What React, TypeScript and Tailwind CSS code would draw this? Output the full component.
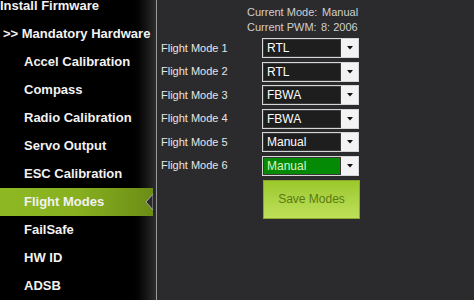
import React from "react";

const navItems = [
  { label: "Install Firmware", indent: false },
  { label: ">> Mandatory Hardware", indent: false, prefix: true },
  { label: "Accel Calibration", indent: true },
  { label: "Compass", indent: true },
  { label: "Radio Calibration", indent: true },
  { label: "Servo Output", indent: true },
  { label: "ESC Calibration", indent: true },
  { label: "Flight Modes", indent: true, active: true },
  { label: "FailSafe", indent: true },
  { label: "HW ID", indent: true },
  { label: "ADSB", indent: true },
];

const modes = [
  { label: "Flight Mode 1", value: "RTL" },
  { label: "Flight Mode 2", value: "RTL" },
  { label: "Flight Mode 3", value: "FBWA" },
  { label: "Flight Mode 4", value: "FBWA" },
  { label: "Flight Mode 5", value: "Manual" },
  { label: "Flight Mode 6", value: "Manual", current: true },
];

const Combo = ({ value, current }: { value: string; current?: boolean }) => (
  <div className="flex h-[20px] w-[97px] border border-[#d6d6d6] bg-[#d6d6d6]">
    <div
      className={
        "flex flex-1 items-center border border-[#3a3a3a] pl-[3px] text-[12px] " +
        (current ? "bg-[#058a05] text-[#d8f5c8]" : "bg-[#1e1e1f] text-white")
      }
    >
      {value}
    </div>
    <div className="flex w-[17px] items-center justify-center bg-[#f3f3f3]">
      <svg width="6" height="4" viewBox="0 0 6 4">
        <path d="M0 0h6L3 3.5z" fill="#111" />
      </svg>
    </div>
  </div>
);

export default function App() {
  return (
    <div
      className="flex h-[300px] w-[474px] overflow-hidden bg-[#2b2b2d]"
      style={{ fontFamily: '"Liberation Sans", Arial, sans-serif' }}
    >
      {/* Sidebar */}
      <div className="relative w-[156px] shrink-0 bg-gradient-to-r from-black from-[82%] to-[#2e2e2e]">
        <div className="-mt-[8px] flex flex-col">
          {navItems.map((item) => (
            <div
              key={item.label}
              className={
                "relative flex h-[28px] items-center text-[13px] font-bold text-[#f2f2f2] " +
                (item.indent ? "pl-[24px] " : item.prefix ? "pl-[3px] " : "pl-0 ") +
                (item.active
                  ? "mr-[3px] bg-gradient-to-r from-[#8fb923] via-[#88b020] to-[#6c8d16] text-[#eaf5c8]"
                  : "")
              }
            >
              {item.label}
              {item.active && (
                <svg
                  className="absolute right-0 top-[6px]"
                  width="8"
                  height="16"
                  viewBox="0 0 8 16"
                >
                  <path d="M8 0L1 8l7 8z" fill="#2b2b2d" stroke="#a8a8a8" strokeWidth="1" />
                </svg>
              )}
            </div>
          ))}
        </div>
      </div>
      <div className="w-px shrink-0 bg-[#9a9a9a]" />

      {/* Content */}
      <div className="flex flex-col pl-[4px] text-[11px] text-[#e6e6e6]">
        <div className="ml-[86px] flex flex-col pt-[5px] leading-[15px] text-[#d0d0d0]">
          <div className="flex">
            <span className="w-[75px]">Current Mode:</span>
            <span>Manual</span>
          </div>
          <div className="flex">
            <span className="w-[74px]">Current PWM:</span>
            <span>8: 2006</span>
          </div>
        </div>

        <div className="mt-[3px] flex flex-col gap-[3.5px]">
          {modes.map((m) => (
            <div key={m.label} className="flex items-center">
              <span className="w-[101px]">{m.label}</span>
              <Combo value={m.value} current={m.current} />
            </div>
          ))}
        </div>

        <button className="ml-[102px] mt-[4px] flex h-[39px] w-[97px] items-center justify-center border border-[#8aa82a] bg-gradient-to-b from-[#9bc82a] to-[#bfe05a] text-[12px] text-[#5a7a14]">
          Save Modes
        </button>
      </div>
    </div>
  );
}
